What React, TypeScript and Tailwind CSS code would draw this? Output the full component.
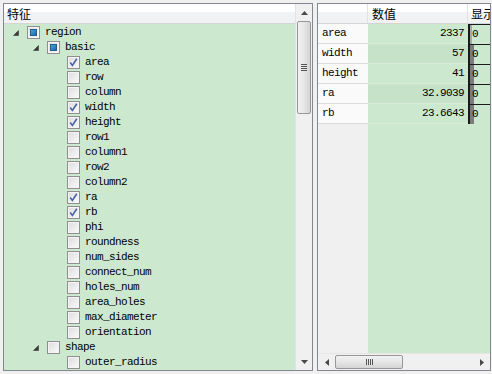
import React from "react";

type Node = { label: string; level: 0 | 1 | 2; expander?: boolean; state: "tri" | "on" | "off" };

const nodes: Node[] = [
  { label: "region", level: 0, expander: true, state: "tri" },
  { label: "basic", level: 1, expander: true, state: "tri" },
  { label: "area", level: 2, state: "on" },
  { label: "row", level: 2, state: "off" },
  { label: "column", level: 2, state: "off" },
  { label: "width", level: 2, state: "on" },
  { label: "height", level: 2, state: "on" },
  { label: "row1", level: 2, state: "off" },
  { label: "column1", level: 2, state: "off" },
  { label: "row2", level: 2, state: "off" },
  { label: "column2", level: 2, state: "off" },
  { label: "ra", level: 2, state: "on" },
  { label: "rb", level: 2, state: "on" },
  { label: "phi", level: 2, state: "off" },
  { label: "roundness", level: 2, state: "off" },
  { label: "num_sides", level: 2, state: "off" },
  { label: "connect_num", level: 2, state: "off" },
  { label: "holes_num", level: 2, state: "off" },
  { label: "area_holes", level: 2, state: "off" },
  { label: "max_diameter", level: 2, state: "off" },
  { label: "orientation", level: 2, state: "off" },
  { label: "shape", level: 1, expander: true, state: "off" },
  { label: "outer_radius", level: 2, state: "off" },
];

const pad: Record<number, string> = { 0: "pl-[9px]", 1: "pl-[29px]", 2: "pl-[49px]" };

const rows = [
  { name: "area", value: "2337", bar: "w-[2px] bg-[#a8a8a8]", alt: false },
  { name: "width", value: "57", bar: "w-[4px] bg-[#7c7c7c]", alt: true },
  { name: "height", value: "41", bar: "w-[4px] bg-[#7c7c7c]", alt: false },
  { name: "ra", value: "32.9039", bar: "w-[4px] bg-[#7c7c7c]", alt: true },
  { name: "rb", value: "23.6643", bar: "w-[4px] bg-[#7c7c7c]", alt: false },
];

function Checkbox({ state }: { state: Node["state"] }) {
  return (
    <div className="relative w-[13px] h-[13px] border border-[#8f8f8f] bg-gradient-to-br from-[#dcdcdc] to-[#fbfbfb] shrink-0">
      <div className="absolute inset-0 border border-[#f4f4f4]" />
      {state === "tri" && (
        <div className="absolute left-[2px] top-[2px] w-[7px] h-[7px] border border-[#1d5f8f] bg-gradient-to-br from-[#48a6e0] to-[#1a6aa8]" />
      )}
      {state === "on" && (
        <svg className="absolute left-0 top-0" width="11" height="11" viewBox="0 0 11 11">
          <path d="M2.2 5.6 L4.4 8.4 L8.8 1.8" fill="none" stroke="#4862a8" strokeWidth="1.6" />
        </svg>
      )}
    </div>
  );
}

function Expander() {
  return (
    <svg width="6" height="6" viewBox="0 0 6 6">
      <polygon points="5.5,0.5 5.5,5.5 0.5,5.5" fill="#3a3a3a" stroke="#3a3a3a" strokeWidth="0.6" />
    </svg>
  );
}

function VScroll() {
  return (
    <div className="w-[17px] h-full flex flex-col bg-[#f0f0f0] border-l border-[#e3e3e3]">
      <div className="h-[17px] flex items-center justify-center">
        <svg width="7" height="4" viewBox="0 0 7 4">
          <polygon points="3.5,0 7,4 0,4" fill="#4a4a4a" />
        </svg>
      </div>
      <div className="mx-[1px] h-[93px] rounded-[2px] border border-[#979797] bg-gradient-to-r from-[#f2f2f2] via-[#e6e6e6] to-[#d4d4d4] flex flex-col items-center justify-center gap-[1px]">
        <div className="w-[6px] h-[1px] bg-[#555]" />
        <div className="w-[6px] h-[1px] bg-[#555]" />
        <div className="w-[6px] h-[1px] bg-[#555]" />
        <div className="w-[6px] h-[1px] bg-[#555]" />
      </div>
      <div className="flex-1" />
      <div className="h-[17px] flex items-center justify-center">
        <svg width="7" height="4" viewBox="0 0 7 4">
          <polygon points="0,0 7,0 3.5,4" fill="#4a4a4a" />
        </svg>
      </div>
    </div>
  );
}

function HScroll() {
  return (
    <div className="h-[17px] flex items-center bg-[#f0f0f0] border-t border-[#e6e6e6]">
      <div className="w-[17px] h-full flex items-center justify-center">
        <svg width="4" height="7" viewBox="0 0 4 7">
          <polygon points="4,0 4,7 0,3.5" fill="#4a4a4a" />
        </svg>
      </div>
      <div className="w-[68px] h-[14px] rounded-[2px] border border-[#979797] bg-gradient-to-b from-[#f2f2f2] via-[#e6e6e6] to-[#d4d4d4] flex items-center justify-center gap-[1px]">
        <div className="w-[1px] h-[6px] bg-[#555]" />
        <div className="w-[1px] h-[6px] bg-[#555]" />
        <div className="w-[1px] h-[6px] bg-[#555]" />
        <div className="w-[1px] h-[6px] bg-[#555]" />
      </div>
      <div className="flex-1" />
      <div className="w-[17px] h-full flex items-center justify-center">
        <svg width="4" height="7" viewBox="0 0 4 7">
          <polygon points="0,0 4,3.5 0,7" fill="#4a4a4a" />
        </svg>
      </div>
    </div>
  );
}

export default function App() {
  const mono = "font-['Liberation_Mono','DejaVu_Sans_Mono',monospace] text-[11px] tracking-[-0.6px] text-black";
  const cjk = "font-['Noto_Sans_CJK_SC','Noto_Sans',sans-serif] text-[12px] text-black";
  return (
    <div className="w-[492px] h-[374px] bg-[#f0f0f0] flex gap-[4px] pt-[3px] pl-[3px] overflow-hidden">
      {/* Left panel */}
      <div className="w-[310px] h-[368px] border border-[#828790] flex shrink-0">
        <div className="flex-1 min-w-0 flex flex-col">
          <div className={`h-[20px] shrink-0 pl-[3px] flex items-center border-b border-[#d5d5d5] bg-[linear-gradient(#ffffff_0%,#ffffff_40%,#f1f2f4_41%,#f1f2f4_100%)] ${cjk}`}>
            特征
          </div>
          <div className="flex-1 bg-[#cce8cf] overflow-hidden pt-[1px]">
            {nodes.map((n) => (
              <div key={n.label} className={`h-[15px] flex items-center ${pad[n.level]}`}>
                <div className="w-[14px] h-full flex items-center">{n.expander && <Expander />}</div>
                <Checkbox state={n.state} />
                <span className={`ml-[5px] leading-[15px] ${mono}`}>{n.label}</span>
              </div>
            ))}
          </div>
        </div>
        <VScroll />
      </div>

      {/* Right panel */}
      <div className="w-[174px] h-[368px] border border-[#828790] flex flex-col shrink-0">
        <div className={`h-[20px] shrink-0 flex border-b border-[#d5d5d5] bg-[linear-gradient(#ffffff_0%,#ffffff_40%,#f1f2f4_41%,#f1f2f4_100%)] ${cjk}`}>
          <div className="w-[50px] shrink-0 border-r border-[#e2e2e2]" />
          <div className="w-[100px] shrink-0 pl-[4px] flex items-center border-r border-[#e2e2e2]">数值</div>
          <div className="flex-1 min-w-0 overflow-hidden whitespace-nowrap pl-[3px] flex items-center">显示</div>
        </div>
        <div className="flex-1 flex flex-col overflow-hidden">
          {rows.map((r) => (
            <div key={r.name} className="h-[20px] shrink-0 flex">
              <div className={`w-[50px] shrink-0 pl-[4px] flex items-center bg-[#fafafa] border-b border-[#dcdcdc] ${mono}`}>{r.name}</div>
              <div className={`w-[100px] shrink-0 pr-[4px] flex items-center justify-end border-b border-[#d9ecdb] ${r.alt ? "bg-[#c6e2c9]" : "bg-[#cce8cf]"} ${mono}`}>
                {r.value}
              </div>
              <div className="relative flex-1 min-w-0 bg-[#cce8cf] border-t border-l-[2px] border-[#1a1a1a] flex items-center">
                <div className={`absolute left-0 top-0 bottom-0 ${r.bar}`} />
                <span className={`relative pl-[2px] ${mono}`}>0</span>
              </div>
            </div>
          ))}
          <div className="flex-1 flex">
            <div className="w-[50px] shrink-0 bg-[#f0f0f0]" />
            <div className="flex-1 bg-[#cce8cf]" />
          </div>
        </div>
        <HScroll />
      </div>
    </div>
  );
}
